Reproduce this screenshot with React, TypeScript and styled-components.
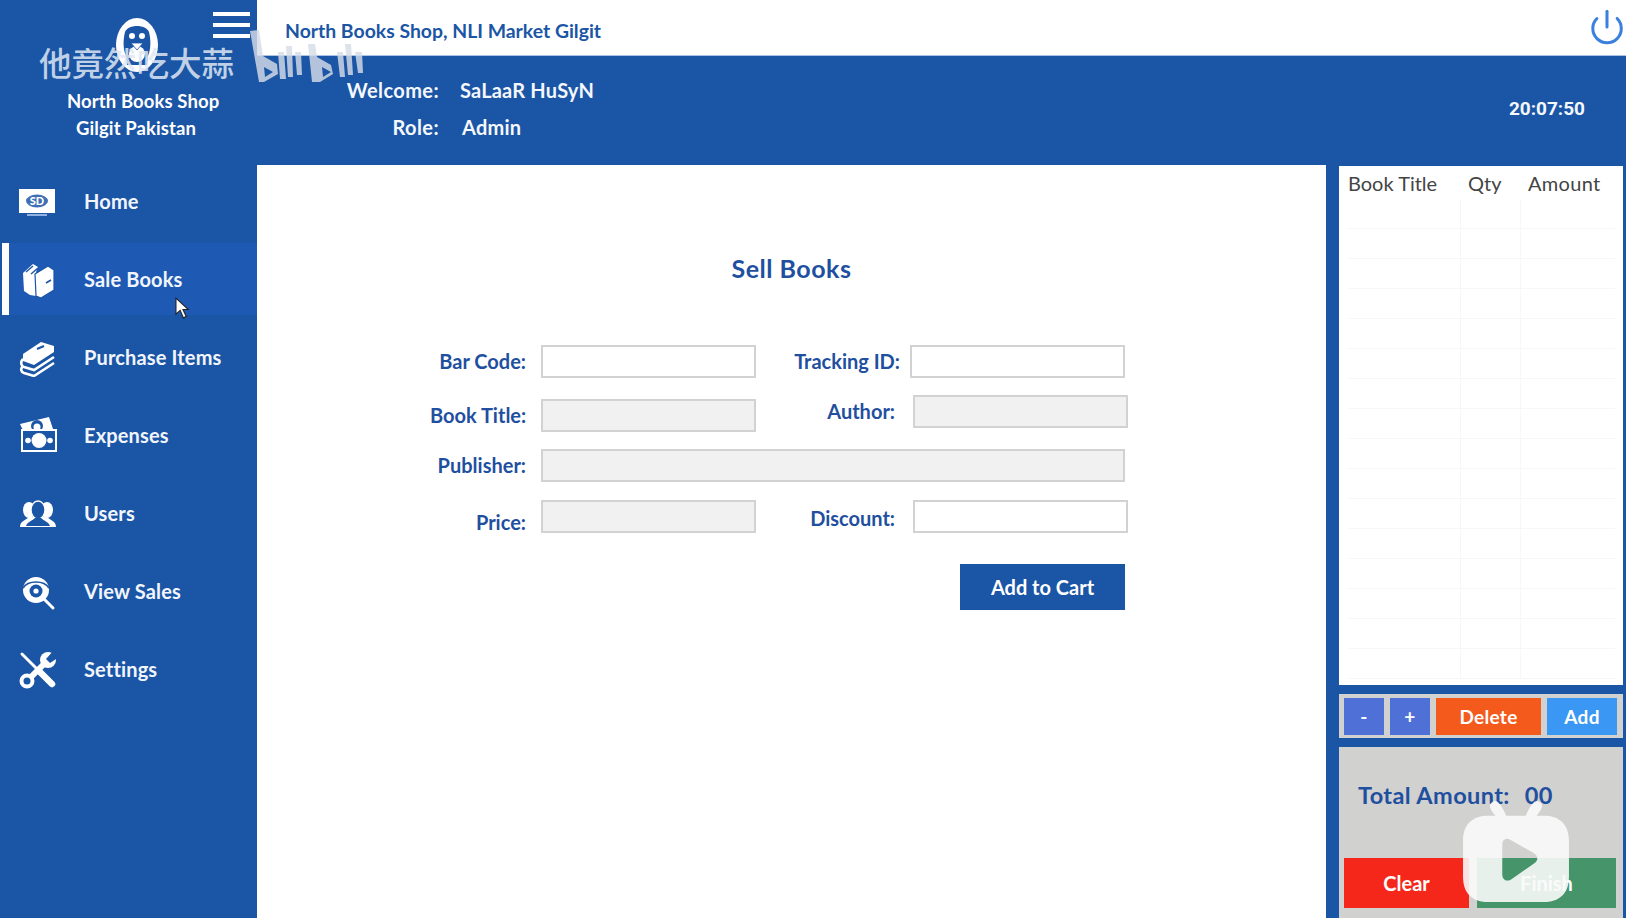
import React from "react";
import styled, { createGlobalStyle } from "styled-components";
import { Power } from "lucide-react";

const BLUE = "#1b55a5";
const LABEL = "#1f4f9f";

const GlobalStyle = createGlobalStyle`
  html, body {
    margin: 0;
    padding: 0;
    background: ${BLUE};
    overflow: hidden;
  }
  * {
    box-sizing: border-box;
  }
  body {
    font-family: "Lato", "Liberation Sans", sans-serif;
  }
`;

/* Sidebar icons */
const HomeIcon = () => (
  <svg width="40" height="40" viewBox="0 0 40 40">
    <rect x="1" y="8" width="36" height="24" fill="#fff" />
    <rect x="9" y="33" width="20" height="2" fill="#8fb2e2" />
    <ellipse cx="19" cy="20" rx="11" ry="6.5" fill="#3f6fb5" />
    <text x="19" y="24" textAnchor="middle" fontSize="11" fontWeight="900" fontFamily="Lato, sans-serif" fill="#fff">
      SD
    </text>
  </svg>
);

const SaleIcon = () => (
  <svg width="40" height="40" viewBox="0 0 40 40">
    <path d="M5 14 L15 5 L20 8 L18 13 L18 37 L12 36 L6 32 Z" fill="#fff" />
    <path d="M17 15 L30 7 L36 11 L36 31 L23 39 L18 37 Z" fill="#fff" stroke={BLUE} strokeWidth="1.2" />
    <path d="M28 24 L33 21" stroke={BLUE} strokeWidth="1.6" />
    <path d="M8 13 L15 7 M13 15 L20 9" stroke={BLUE} strokeWidth="1.4" />
  </svg>
);

const PurchaseIcon = () => (
  <svg width="40" height="40" viewBox="0 0 40 40">
    <path d="M5 17 L23 5 L36 9 L36 15 L16 28 L5 24 Z" fill="#fff" />
    <path d="M19 12 L26 9" stroke={BLUE} strokeWidth="2" />
    <path d="M5 22 C2 25 3 29 6 30 L16 33 L36 20" fill="none" stroke="#fff" strokeWidth="2.6" />
    <path d="M5 29 C2 32 3 35 6 36 L16 39 L36 26" fill="none" stroke="#fff" strokeWidth="2.6" />
  </svg>
);

const ExpensesIcon = () => (
  <svg width="40" height="40" viewBox="0 0 40 40">
    <path d="M2 9 L31 2 L35 14 L8 22 Z" fill="#fff" />
    <circle cx="19" cy="11" r="6" fill={BLUE} />
    <circle cx="19" cy="12" r="3.5" fill="#fff" />
    <rect x="4" y="15" width="34" height="21" fill={BLUE} stroke="#fff" strokeWidth="2" />
    <circle cx="21" cy="25.5" r="7.5" fill="#fff" />
    <circle cx="10" cy="25.5" r="2.8" fill="#fff" />
    <circle cx="32" cy="25.5" r="2.8" fill="#fff" />
  </svg>
);

const UsersIcon = () => (
  <svg width="40" height="40" viewBox="0 0 40 40">
    <ellipse cx="11" cy="17" rx="6" ry="8" fill="#fff" />
    <ellipse cx="29" cy="17" rx="6" ry="8" fill="#fff" />
    <path d="M2 34 C2 28 8 27 11 24 L29 24 C32 27 38 28 38 34 Z" fill="#fff" />
    <ellipse cx="20" cy="17" rx="7" ry="9" fill={BLUE} stroke="#fff" strokeWidth="1.4" />
    <path d="M8 33 C9 29 14 28 17 25 L23 25 C26 28 31 29 32 33 Z" fill={BLUE} />
  </svg>
);

const ViewSalesIcon = () => (
  <svg width="40" height="40" viewBox="0 0 40 40">
    <circle cx="18" cy="19" r="13" fill="#fff" />
    <path d="M5 17 C10 9 26 9 31 17" fill="none" stroke={BLUE} strokeWidth="1.6" />
    <circle cx="18" cy="20" r="6.5" fill={BLUE} />
    <circle cx="18" cy="20" r="2.6" fill="#fff" />
    <path d="M26 28 L35 37" stroke="#fff" strokeWidth="3" strokeLinecap="round" />
  </svg>
);

const SettingsIcon = () => (
  <svg width="40" height="40" viewBox="0 0 40 40">
    <path d="M4 5 L20 21" stroke="#fff" strokeWidth="3" strokeLinecap="round" />
    <path d="M21 22 L34 35" stroke="#fff" strokeWidth="6.5" strokeLinecap="round" />
    <circle cx="9" cy="32" r="5.5" fill="none" stroke="#fff" strokeWidth="4" />
    <path d="M13 28 L28 13" stroke="#fff" strokeWidth="6" />
    <circle cx="30" cy="11" r="8" fill="#fff" />
    <path d="M28 10 L36 1 L41 8 L32 14 Z" fill={BLUE} />
  </svg>
);

const items = [
  { label: "Home", Icon: HomeIcon },
  { label: "Sale Books", Icon: SaleIcon, active: true },
  { label: "Purchase Items", Icon: PurchaseIcon },
  { label: "Expenses", Icon: ExpensesIcon },
  { label: "Users", Icon: UsersIcon },
  { label: "View Sales", Icon: ViewSalesIcon },
  { label: "Settings", Icon: SettingsIcon },
];

const App: React.FC = () => {
  return (
    <Page>
      <GlobalStyle />
      <Sidebar>
        <BrandTop>
          <Penguin viewBox="0 0 44 54">
            <ellipse cx="22" cy="27" rx="21" ry="27" fill="#fff" />
            <path d="M10 14 C13 6 31 6 34 14 C36 22 36 31 33 38 L32 47 L12 47 L11 38 C8 31 8 22 10 14 Z" fill={BLUE} />
            <ellipse cx="22" cy="36" rx="8" ry="8" fill="#fff" />
            <circle cx="17" cy="18" r="3" fill="#fff" />
            <circle cx="27" cy="18" r="3" fill="#fff" />
            <path d="M16 25 L28 25 L22 32 Z" fill="#fff" stroke={BLUE} strokeWidth="0.8" />
          </Penguin>
          <Hamburger>
            <span />
            <span />
            <span />
          </Hamburger>
        </BrandTop>
        <BrandName $indent={67}>North Books Shop</BrandName>
        <BrandName $indent={76}>Gilgit Pakistan</BrandName>
        <NavList>
          {items.map(({ label, Icon, active }) => (
            <NavItem key={label} $active={!!active}>
              <NavIcon>
                <Icon />
              </NavIcon>
              <span>{label}</span>
              {active && (
                <Cursor viewBox="0 0 16 24" width="15" height="23">
                  <path d="M1 1 L1 18 L5.5 14 L9 22 L12 20.5 L8.5 13 L14 13 Z" fill="#fff" stroke="#222" strokeWidth="1.2" />
                </Cursor>
              )}
            </NavItem>
          ))}
        </NavList>
      </Sidebar>

      <Main>
        <TopBar>
          <ShopTitle>North Books Shop, NLI Market Gilgit</ShopTitle>
          <Power size={38} color="#3a80dc" strokeWidth={1.9} />
        </TopBar>
        <InfoBar>
          <UserInfo>
            <InfoLabel>Welcome:</InfoLabel>
            <InfoValue>SaLaaR HuSyN</InfoValue>
            <InfoLabel>Role:</InfoLabel>
            <InfoValue $indent={2}>Admin</InfoValue>
          </UserInfo>
          <Clock>20:07:50</Clock>
        </InfoBar>
        <Body>
          <Content>
            <Title>Sell Books</Title>
            <Form>
              <FormRow>
                <FieldLabel>Bar Code:</FieldLabel>
                <Field />
                <SideLabel $width={144} $gap={10}>Tracking ID:</SideLabel>
                <Field />
              </FormRow>
              <FormRow $top={22}>
                <FieldLabel>Book Title:</FieldLabel>
                <Field readOnly $locked />
                <SideLabel $width={139} $gap={18} $shift={-4}>Author:</SideLabel>
                <Field readOnly $locked $shift={-4} />
              </FormRow>
              <FormRow $top={18}>
                <FieldLabel>Publisher:</FieldLabel>
                <Field readOnly $locked $wide />
              </FormRow>
              <FormRow $top={19}>
                <FieldLabel $shift={6}>Price:</FieldLabel>
                <Field readOnly $locked />
                <SideLabel $width={139} $gap={18} $shift={2}>Discount:</SideLabel>
                <Field />
              </FormRow>
              <FormActions>
                <CartButton>Add to Cart</CartButton>
              </FormActions>
            </Form>
          </Content>

          <Rail>
            <CartTable>
              <CartHead>
                <span>Book Title</span>
                <span>Qty</span>
                <span>Amount</span>
              </CartHead>
              {Array.from({ length: 16 }).map((_, i) => (
                <CartRow key={i}>
                  <i />
                  <i />
                  <i />
                </CartRow>
              ))}
            </CartTable>
            <CartTools>
              <ToolButton $bg="#4f70d6" $width={40}>-</ToolButton>
              <ToolButton $bg="#4f70d6" $width={40}>+</ToolButton>
              <ToolButton $bg="#f45a1c" $width={105}>Delete</ToolButton>
              <ToolButton $bg="#3a97f3" $width={70}>Add</ToolButton>
            </CartTools>
            <TotalPanel>
              <TotalLine>
                <span>Total Amount:</span>
                <span>00</span>
              </TotalLine>
              <TotalActions>
                <BigButton $bg="#f5271a" $width={125}>Clear</BigButton>
                <BigButton $bg="#45946a" $width={139}>Finish</BigButton>
              </TotalActions>
            </TotalPanel>
          </Rail>
        </Body>
      </Main>

      {/* video watermarks over the screen */}
      <WatermarkText>他竟然吃大蒜</WatermarkText>
      <BiliMark viewBox="0 0 120 54">
        <path
          fillRule="evenodd"
          d="M0 1 L9 0 L13 26 L27 34 L28 44 L14 52 L9 52 Z M14 37 L23 42 L15 47 Z"
        />
        <path d="M28 22 L34 22 L36 49 L30 49 Z M36 16 L42 16 L43 47 L38 47 Z M45 22 L51 22 L52 45 L47 45 Z" />
        <path
          fillRule="evenodd"
          d="M58 14 L65 14 L67 27 L81 35 L83 44 L70 52 L62 52 Z M72 37 L81 42 L73 47 Z"
        />
        <path d="M87 22 L93 22 L95 47 L90 47 Z M95 14 L101 14 L103 45 L98 45 Z M105 22 L112 22 L113 43 L108 43 Z" />
      </BiliMark>
      <PlayMark viewBox="0 0 108 104">
        <path
          fillRule="evenodd"
          d="M30 2 C34 -1 38 2 44 16 L64 16 C70 2 74 -1 78 2 C83 5 80 10 75 16 L82 16 C98 16 108 24 108 42 L108 78 C108 96 98 104 82 104 L26 104 C10 104 0 96 0 78 L0 42 C0 24 10 16 26 16 L33 16 C28 10 25 5 30 2 Z M40 46 C40 40 44 38 49 41 L72 54 C77 57 77 62 72 65 L49 81 C44 84 40 81 40 76 Z"
        />
      </PlayMark>
    </Page>
  );
};

export default App;

const Page = styled.div`
  position: relative;
  display: grid;
  grid-template-columns: 257px 1fr;
  width: 1626px;
  height: 918px;
  overflow: hidden;
  background: ${BLUE};
`;

/* Sidebar */
const Sidebar = styled.aside`
  display: flex;
  flex-direction: column;
  background: ${BLUE};
`;

const BrandTop = styled.div`
  display: flex;
  align-items: flex-start;
  height: 88px;
  padding: 12px 0 0 115px;
`;

const Penguin = styled.svg`
  width: 44px;
  height: 54px;
  margin-top: 6px;
`;

const Hamburger = styled.div`
  display: flex;
  flex-direction: column;
  gap: 7px;
  width: 37px;
  margin-left: 54px;

  span {
    height: 4px;
    background: #fff;
  }
`;

const BrandName = styled.div<{ $indent: number }>`
  height: 27px;
  padding-left: ${(p) => p.$indent}px;
  line-height: 27px;
  font-size: 18.5px;
  font-weight: 700;
  letter-spacing: 0.1px;
  color: #fff;
  white-space: nowrap;
`;

const NavList = styled.nav`
  display: flex;
  flex-direction: column;
  gap: 6px;
  margin-top: 23px;
`;

const NavItem = styled.div<{ $active: boolean }>`
  position: relative;
  display: flex;
  align-items: center;
  height: 72px;
  padding-left: 18px;
  font-size: 20px;
  font-weight: 700;
  letter-spacing: 0.15px;
  color: #f2f6fc;
  background: ${(p) => (p.$active ? "#1e5ab4" : "transparent")};
  box-shadow: ${(p) => (p.$active ? "inset 2px 0 0 #1b55a5, inset 9px 0 0 #fff" : "none")};
`;

const NavIcon = styled.div`
  display: flex;
  flex: none;
  width: 40px;
  height: 40px;
  margin-right: 26px;
`;

const Cursor = styled.svg`
  position: absolute;
  left: 175px;
  top: 54px;
`;

/* Main column */
const Main = styled.main`
  display: flex;
  flex-direction: column;
  min-width: 0;
`;

const TopBar = styled.header`
  display: flex;
  align-items: flex-start;
  justify-content: space-between;
  height: 56px;
  padding: 8px 0 0 28px;
  background: #fff;
  border-bottom: 1px solid #a9c4e8;
`;

const ShopTitle = styled.div`
  margin-top: 11px;
  font-size: 19.4px;
  font-weight: 700;
  line-height: 24px;
  color: ${BLUE};
`;

const InfoBar = styled.div`
  display: flex;
  align-items: center;
  justify-content: space-between;
  height: 109px;
  padding: 0 41px 0 88px;
`;

const UserInfo = styled.div`
  display: grid;
  grid-template-columns: 94px auto;
  column-gap: 21px;
  row-gap: 13px;
  margin-top: -5px;
  color: #f4f7fc;
  font-size: 20px;
  line-height: 24px;
  font-weight: 700;
`;

const InfoLabel = styled.span`
  text-align: right;
  letter-spacing: 0.4px;
`;

const InfoValue = styled.span<{ $indent?: number }>`
  padding-left: ${(p) => p.$indent ?? 0}px;
  letter-spacing: 0.2px;
`;

const Clock = styled.div`
  margin-top: -4px;
  font-family: "Roboto", "Liberation Sans", sans-serif;
  font-size: 19px;
  font-weight: 700;
  color: #f4f7fc;
`;

const Body = styled.div`
  display: flex;
  flex: 1;
  min-height: 0;
`;

const Content = styled.section`
  flex: none;
  width: 1069px;
  background: #fff;
  padding-top: 88px;
`;

const Title = styled.h1`
  margin: 0;
  text-align: center;
  font-size: 25px;
  line-height: 30px;
  font-weight: 700;
  letter-spacing: 0.5px;
  color: ${LABEL};
`;

const Form = styled.div`
  width: 710px;
  margin: 62px 0 0 173px;
`;

const FormRow = styled.div<{ $top?: number }>`
  display: flex;
  align-items: flex-start;
  height: 32px;
  margin-top: ${(p) => p.$top ?? 0}px;
`;

const FieldLabel = styled.label<{ $shift?: number }>`
  flex: none;
  width: 96px;
  margin: ${(p) => p.$shift ?? 0}px 15px 0 0;
  text-align: right;
  font-size: 20px;
  line-height: 32px;
  font-weight: 700;
  color: ${LABEL};
  white-space: nowrap;
`;

const SideLabel = styled.label<{ $width: number; $gap: number; $shift?: number }>`
  flex: none;
  width: ${(p) => p.$width}px;
  margin: ${(p) => p.$shift ?? 0}px ${(p) => p.$gap}px 0 0;
  text-align: right;
  font-size: 20px;
  line-height: 32px;
  font-weight: 700;
  color: ${LABEL};
  white-space: nowrap;
`;

const Field = styled.input<{ $locked?: boolean; $wide?: boolean; $shift?: number }>`
  flex: none;
  width: ${(p) => (p.$wide ? 584 : 215)}px;
  height: 33px;
  margin-top: ${(p) => p.$shift ?? 0}px;
  border: 2px solid #d2d2d2;
  border-radius: 0;
  background: ${(p) => (p.$locked ? "#f1f1f1" : "#fff")};
  outline: none;
`;

const FormActions = styled.div`
  display: flex;
  margin: 32px 0 0 530px;
`;

const CartButton = styled.button`
  width: 165px;
  height: 46px;
  border: none;
  background: ${BLUE};
  color: #fff;
  font-family: inherit;
  font-size: 20px;
  font-weight: 700;
`;

/* Cart rail */
const Rail = styled.div`
  display: flex;
  flex: 1;
  flex-direction: column;
  gap: 9px;
  padding: 1px 3px 0 13px;
`;

const CartTable = styled.div`
  flex: none;
  height: 519px;
  padding: 0 8px 0 9px;
  background: #fff;
  overflow: hidden;
`;

const CartHead = styled.div`
  display: grid;
  grid-template-columns: 120px 60px 1fr;
  height: 33px;
  align-items: center;
  font-size: 20px;
  font-weight: 400;
  color: #444;

  span:last-child {
    letter-spacing: 0.3px;
  }
`;

const CartRow = styled.div`
  display: grid;
  grid-template-columns: 113px 60px 1fr;
  height: 30px;
  border-bottom: 1px solid #f7f7f7;

  i {
    border-right: 1px solid #f7f7f7;
  }
  i:last-child {
    border-right: none;
  }
`;

const CartTools = styled.div`
  display: flex;
  flex: none;
  gap: 6px;
  height: 44px;
  padding: 4px 5px 3px;
  background: #d1d1cf;
`;

const ToolButton = styled.button<{ $bg: string; $width: number }>`
  width: ${(p) => p.$width}px;
  border: none;
  padding: 0;
  background: ${(p) => p.$bg};
  color: #fff;
  font-family: inherit;
  font-size: 19px;
  font-weight: 700;
  letter-spacing: 0.3px;
`;

const TotalPanel = styled.div`
  display: flex;
  flex: 1;
  flex-direction: column;
  padding: 33px 5px 10px;
  background: #d1d1cf;
`;

const TotalLine = styled.div`
  display: flex;
  gap: 15px;
  padding-left: 14px;
  font-size: 23.5px;
  line-height: 30px;
  font-weight: 700;
  letter-spacing: 0.4px;
  color: ${LABEL};
`;

const TotalActions = styled.div`
  display: flex;
  gap: 8px;
  margin-top: auto;
`;

const BigButton = styled.button<{ $bg: string; $width: number }>`
  width: ${(p) => p.$width}px;
  height: 50px;
  border: none;
  background: ${(p) => p.$bg};
  color: #fff;
  font-family: inherit;
  font-size: 20px;
  font-weight: 700;
`;

/* Watermarks */
const WatermarkText = styled.div`
  position: absolute;
  left: 39px;
  top: 40px;
  font-family: "Noto Sans CJK SC", "Lato", sans-serif;
  font-size: 32.5px;
  line-height: 44px;
  font-weight: 500;
  color: rgba(222, 231, 244, 0.85);
  white-space: nowrap;
`;

const BiliMark = styled.svg`
  position: absolute;
  left: 250px;
  top: 30px;
  width: 120px;
  height: 54px;
  fill: rgba(214, 220, 230, 0.82);
`;

const PlayMark = styled.svg`
  position: absolute;
  left: 1462px;
  top: 800px;
  width: 108px;
  height: 102px;
  fill: rgba(250, 250, 250, 0.9);
`;
